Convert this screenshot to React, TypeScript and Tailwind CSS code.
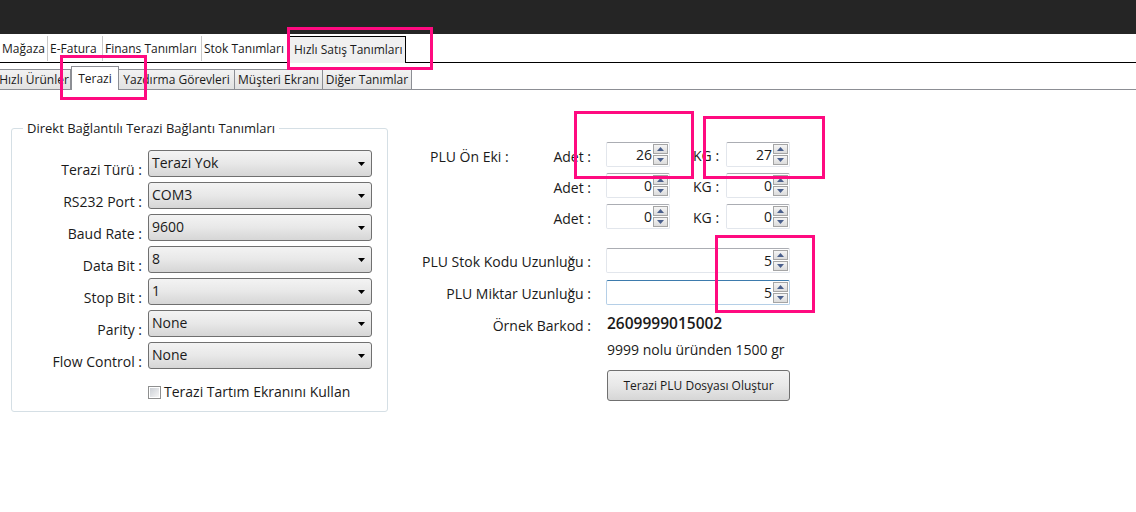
import React from 'react';

const font = "font-['Open_Sans',sans-serif]";

const SpinBtn = ({ up }: { up?: boolean }) => (
  <div className="flex items-center justify-center w-[15px] h-[10px] border border-[#a5a5a5] bg-linear-to-b from-[#f5f5f5] to-[#dcdcdc]">
    <svg width="7" height="4" viewBox="0 0 7 4">
      {up ? <path d="M0 4 L3.5 0 L7 4 Z" fill="#4a5f8c" /> : <path d="M0 0 L3.5 4 L7 0 Z" fill="#4a5f8c" />}
    </svg>
  </div>
);

const Spin = ({ value, focused, width }: { value: string; focused?: boolean; width: string }) => (
  <div
    className={`flex items-center h-[25px] border rounded-[2px] bg-white ${width} ${
      focused ? 'border-[#b5cfe7] border-t-[#3d7bad]' : 'border-[#e2e6ec] border-t-[#abadb3]'
    }`}
  >
    <span className="flex-1 text-right pr-[1px] text-[14px] leading-none text-[#1a1a1a]">{value}</span>
    <div className="flex flex-col gap-[1px] mr-[1px]">
      <SpinBtn up />
      <SpinBtn />
    </div>
  </div>
);

const Combo = ({ label, value }: { label: string; value: string }) => (
  <div className="flex">
    <div className="w-[130px] self-end text-right text-[14px] leading-[19px] mb-[-2px] text-[#1a1a1a]">{label}</div>
    <div className="ml-[6px] flex items-start justify-between w-[224px] h-[27px] border border-[#707070] rounded-[3px] bg-linear-to-b from-[#f3f3f3] via-[#e8e8e8] to-[#d6d6d6] pl-[3px] pr-[6px]">
      <span className="text-[14px] leading-[19px] pt-[2px] text-[#1a1a1a]">{value}</span>
      <svg className="mt-[11px]" width="7" height="4" viewBox="0 0 7 4">
        <path d="M0 0 L7 0 L3.5 4 Z" fill="#000" />
      </svg>
    </div>
  </div>
);

const topTabs = [
  { name: 'Mağaza', w: 'w-[48px]' },
  { name: 'E-Fatura', w: 'w-[55px]' },
  { name: 'Finans Tanımları', w: 'w-[99px]' },
  { name: 'Stok Tanımları', w: 'w-[86px]' },
];

const subTabs = [
  { name: 'Yazdırma Görevleri', w: 'w-[116px]' },
  { name: 'Müşteri Ekranı', w: 'w-[88px]' },
  { name: 'Diğer Tanımlar', w: 'w-[89px]' },
];

const PrefixRow = ({ first, adet, kg }: { first?: boolean; adet: string; kg: string }) => (
  <div className="flex items-center h-[25px]">
    <div className="w-[175px] flex items-center justify-between text-[14px] pt-[3px] text-[#1a1a1a]">
      <span className="pl-[14px]">{first ? 'PLU Ön Eki :' : ''}</span>
      <span>Adet :</span>
    </div>
    <div className="ml-[15px]">
      <Spin value={adet} width="w-[64px]" />
    </div>
    <span className="ml-[23px] w-[33px] text-[14px] pt-[1px] text-[#1a1a1a]">KG :</span>
    <Spin value={kg} width="w-[64px]" />
  </div>
);

export default function App() {
  return (
    <div className={`relative w-[1136px] h-[512px] bg-white overflow-hidden ${font} text-[#1a1a1a]`}>
      {/* title bar */}
      <div className="h-[34px] bg-[#252525]" />

      {/* top tabs */}
      <div className="flex items-end h-[29px] border-b border-black">
        {topTabs.map((t) => (
          <div
            key={t.name}
            className={`${t.w} h-[25px] mb-[1px] flex items-center pl-[2px] border-r border-[#c8c8c8] text-[12px] whitespace-nowrap`}
          >
            {t.name}
          </div>
        ))}
        <div className="w-[118px] h-[27px] mb-[-1px] flex items-center pl-[5px] bg-[#f0f0f0] border border-b-0 border-black text-[12px] whitespace-nowrap">
          Hızlı Satış Tanımları
        </div>
      </div>

      {/* sub tabs */}
      <div className="flex items-end h-[27px] border-b border-[#8c8e94]">
        <div className="ml-[-3px] w-[74px] h-[20px] flex items-center justify-center border border-b-0 border-[#8c8e94] bg-linear-to-b from-[#f2f2f2] to-[#e2e2e2] text-[12px] whitespace-nowrap">
          Hızlı Ürünler
        </div>
        <div className="w-[48px] h-[24px] mb-[-1px] flex items-center justify-center border border-b-0 border-[#8c8e94] bg-white text-[12px]">
          Terazi
        </div>
        {subTabs.map((t) => (
          <div
            key={t.name}
            className={`${t.w} h-[20px] flex items-center justify-center border border-l-0 border-b-0 border-[#8c8e94] bg-linear-to-b from-[#f2f2f2] to-[#e2e2e2] text-[12px] whitespace-nowrap`}
          >
            {t.name}
          </div>
        ))}
      </div>

      {/* content */}
      <div className="flex items-start">
        <fieldset className="ml-[11px] mt-[30px] w-[377px] h-[292px] border border-[#d5dfe5] rounded-[3px] px-0 pt-[13px]">
          <legend className="ml-[11px] px-[4px] text-[13px] leading-[17px] text-[#1a1a1a]">
            Direkt Bağlantılı Terazi Bağlantı Tanımları
          </legend>
          <div className="flex flex-col gap-[5px]">
            <Combo label="Terazi Türü :" value="Terazi Yok" />
            <Combo label="RS232 Port :" value="COM3" />
            <Combo label="Baud Rate :" value="9600" />
            <Combo label="Data Bit :" value="8" />
            <Combo label="Stop Bit :" value="1" />
            <Combo label="Parity :" value="None" />
            <Combo label="Flow Control :" value="None" />
          </div>
          <label className="flex items-center ml-[136px] mt-[14px] text-[14px] leading-[18px]">
            <span className="w-[13px] h-[13px] border border-[#8e8f8f] bg-white p-[1px]">
              <span className="block w-full h-full bg-linear-to-br from-[#cbcfd5] to-[#f6f6f6]" />
            </span>
            <span className="ml-[3px]">Terazi Tartım Ekranını Kullan</span>
          </label>
        </fieldset>

        <div className="ml-[28px] mt-[52px] flex flex-col">
          <div className="flex flex-col gap-[6px]">
            <PrefixRow first adet="26" kg="27" />
            <PrefixRow adet="0" kg="0" />
            <PrefixRow adet="0" kg="0" />
          </div>

          <div className="flex items-center h-[25px] mt-[19px]">
            <span className="w-[175px] text-right text-[14px] pt-[2px]">PLU Stok Kodu Uzunluğu :</span>
            <div className="ml-[15px]">
              <Spin value="5" width="w-[184px]" />
            </div>
          </div>
          <div className="flex items-center h-[25px] mt-[7px]">
            <span className="w-[175px] text-right text-[14px] pt-[2px]">PLU Miktar Uzunluğu :</span>
            <div className="ml-[15px]">
              <Spin value="5" focused width="w-[184px]" />
            </div>
          </div>

          <div className="flex items-center h-[24px] mt-[7px]">
            <span className="w-[175px] text-right text-[14px] pt-[2px]">Örnek Barkod :</span>
            <span className="ml-[16px] text-[15.5px] font-semibold">2609999015002</span>
          </div>
          <div className="ml-[191px] mt-[3px] text-[14px] leading-[22px]">9999 nolu üründen 1500 gr</div>
          <button className="ml-[191px] mt-[9px] w-[183px] h-[31px] border border-[#707070] rounded-[3px] bg-linear-to-b from-[#f3f3f3] via-[#e8e8e8] to-[#d6d6d6] text-[12px] text-[#1a1a1a]">
            Terazi PLU Dosyası Oluştur
          </button>
        </div>
      </div>

      {/* annotation boxes */}
      <div className="absolute left-[287px] top-[27px] w-[146px] h-[43px] border-[3px] border-[#ff0a80]" />
      <div className="absolute left-[60px] top-[55px] w-[87px] h-[45px] border-[3px] border-[#ff0a80]" />
      <div className="absolute left-[574px] top-[111px] w-[120px] h-[68px] border-[3px] border-[#ff0a80]" />
      <div className="absolute left-[703px] top-[116px] w-[122px] h-[63px] border-[3px] border-[#ff0a80]" />
      <div className="absolute left-[715px] top-[235px] w-[100px] h-[78px] border-[3px] border-[#ff0a80]" />
    </div>
  );
}
